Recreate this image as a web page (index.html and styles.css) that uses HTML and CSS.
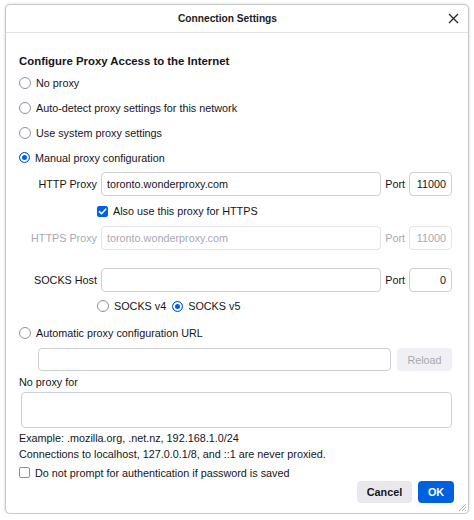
FILE: index.html
```html
<!DOCTYPE html>
<html>
<head>
<meta charset="utf-8">
<link rel="stylesheet" href="styles.css">
</head>
<body>
<div class="dialog">
  <div class="titlebar">
    <span class="title">Connection Settings</span>
    <svg class="close" width="11" height="11" viewBox="0 0 11 11"><path d="M1 1L10 10M10 1L1 10" stroke="#2b2b2b" stroke-width="1.3" fill="none"/></svg>
  </div>
  <div class="content">
    <div class="heading">Configure Proxy Access to the Internet</div>
    <div class="radio-row"><span class="radio"></span><span>No proxy</span></div>
    <div class="radio-row"><span class="radio"></span><span>Auto-detect proxy settings for this network</span></div>
    <div class="radio-row"><span class="radio"></span><span>Use system proxy settings</span></div>
    <div class="radio-row"><span class="radio checked"></span><span>Manual proxy configuration</span></div>

    <div class="proxy-grid http">
      <span class="lbl">HTTP Proxy</span>
      <div class="input">toronto.wonderproxy.com</div>
      <span class="port-lbl">Port</span>
      <div class="input num">11000</div>
    </div>
    <div class="check-row indent">
      <span class="checkbox on"><svg width="11" height="11" viewBox="0 0 11 11"><path d="M2.4 5.6L4.5 7.7L8.7 3.2" stroke="#fff" stroke-width="1.6" fill="none" stroke-linecap="round" stroke-linejoin="round"/></svg></span>
      <span>Also use this proxy for HTTPS</span>
    </div>
    <div class="proxy-grid disabled">
      <span class="lbl">HTTPS Proxy</span>
      <div class="input">toronto.wonderproxy.com</div>
      <span class="port-lbl">Port</span>
      <div class="input num">11000</div>
    </div>
    <div class="proxy-grid socks">
      <span class="lbl">SOCKS Host</span>
      <div class="input"></div>
      <span class="port-lbl">Port</span>
      <div class="input num">0</div>
    </div>
    <div class="socks-row indent">
      <span class="radio"></span><span class="opt">SOCKS v4</span>
      <span class="radio checked"></span><span>SOCKS v5</span>
    </div>
    <div class="radio-row auto"><span class="radio"></span><span>Automatic proxy configuration URL</span></div>
    <div class="url-row">
      <div class="input"></div>
      <div class="btn reload">Reload</div>
    </div>
    <div class="plain noproxy">No proxy for</div>
    <div class="textarea"></div>
    <div class="plain example">Example: .mozilla.org, .net.nz, 192.168.1.0/24</div>
    <div class="plain connections">Connections to localhost, 127.0.0.1/8, and ::1 are never proxied.</div>
    <div class="check-row last"><span class="checkbox"></span><span>Do not prompt for authentication if password is saved</span></div>
    <div class="footer">
      <div class="btn cancel">Cancel</div>
      <div class="btn ok">OK</div>
    </div>
  </div>
  <svg class="grip" width="10" height="10" viewBox="0 0 10 10"><path d="M9 2L2 9M9 5L5 9M9 8L8 9" stroke="#9a9a9a" stroke-width="0.8"/></svg>
</div>
</body>
</html>
```
FILE: styles.css
```css
html, body {
  margin: 0;
  padding: 0;
  background: #ffffff;
}
body {
  font-family: "Liberation Sans", Arial, sans-serif;
  font-size: 10.8px;
  color: #15141a;
  padding: 4px 5px 0 5px;
}
.dialog {
  position: relative;
  width: 464px;
  height: 510px;
  box-sizing: border-box;
  border: 1px solid #c9c9c9;
  border-radius: 5px;
  background: #fff;
  box-shadow: 0 0 3px rgba(0,0,0,0.18);
  display: flex;
  flex-direction: column;
}
.titlebar {
  height: 27px;
  border-bottom: 1px solid #e2e2e2;
  display: flex;
  align-items: center;
  justify-content: center;
  padding-right: 19px;
  position: relative;
}
.title {
  font-weight: bold;
  font-size: 10.2px;
  color: #1c1b22;
}
.close {
  position: absolute;
  right: 9px;
  top: 8px;
}
.content {
  padding: 19px 16px 0 13px;
  display: flex;
  flex-direction: column;
}
.heading {
  height: 18px;
  line-height: 18px;
  font-weight: bold;
  font-size: 11.4px;
}
.radio-row, .check-row, .socks-row {
  display: flex;
  align-items: center;
  height: 25px;
}
.radio {
  width: 10px;
  height: 10px;
  border: 1px solid #8f8f9d;
  border-radius: 50%;
  box-sizing: content-box;
  margin-right: 5px;
  flex: none;
}
.radio.checked {
  border: 1.5px solid #0061e0;
  width: 9px;
  height: 9px;
  background: #0061e0;
  box-shadow: inset 0 0 0 2px #fff;
}
.proxy-grid {
  display: grid;
  grid-template-columns: 78px 1fr auto 43px;
  column-gap: 4px;
  align-items: center;
  height: 24px;
}
.proxy-grid.http { margin-top: 2px; }
.proxy-grid.socks { margin-top: 18px; }
.lbl {
  text-align: right;
}
.input {
  height: 24px;
  box-sizing: border-box;
  border: 1px solid #cfcfd8;
  border-radius: 4px;
  padding: 0 5px;
  display: flex;
  align-items: center;
  background: #fff;
}
.input.num {
  justify-content: flex-end;
}
.disabled {
  color: #a8a8b0;
}
.disabled .input {
  border-color: #e3e3e8;
}
.check-row.indent {
  height: 30px;
  padding-left: 78px;
}
.checkbox {
  width: 11px;
  height: 11px;
  box-sizing: border-box;
  border: 1px solid #8f8f9d;
  border-radius: 2px;
  margin-right: 5px;
  display: flex;
  flex: none;
}
.checkbox.on {
  background: #0061e0;
  border-color: #0061e0;
}
.checkbox.on svg {
  margin: -1px;
}
.socks-row {
  height: 28px;
  padding-left: 78px;
}
.socks-row .opt {
  margin-right: 6px;
}
.radio-row.auto {
  height: 25px;
}
.url-row {
  display: flex;
  gap: 6px;
  margin-top: 3px;
  padding-left: 19px;
  height: 23px;
}
.url-row .input {
  flex: 1;
  height: 23px;
}
.btn {
  display: flex;
  align-items: center;
  justify-content: center;
  border-radius: 4px;
  font-weight: bold;
}
.reload {
  width: 55px;
  background: #f0f0f4;
  color: #a8a8b0;
  font-weight: normal;
}
.plain {
  display: flex;
  align-items: center;
}
.noproxy { height: 21px; }
.textarea {
  margin-left: 2px;
  height: 36px;
  box-sizing: border-box;
  border: 1px solid #cfcfd8;
  border-radius: 4px;
}
.example { height: 17px; margin-top: 1px; }
.connections { height: 15px; }
.check-row.last {
  height: 17px;
  margin-top: 3px;
}
.footer {
  display: flex;
  justify-content: flex-end;
  gap: 6px;
  height: 22px;
  margin-right: -2px;
}
.cancel {
  width: 55px;
  background: #e9e9ed;
  color: #15141a;
}
.ok {
  width: 36px;
  background: #0061e0;
  color: #fff;
}
.grip {
  position: absolute;
  right: 1px;
  bottom: 1px;
}
```
